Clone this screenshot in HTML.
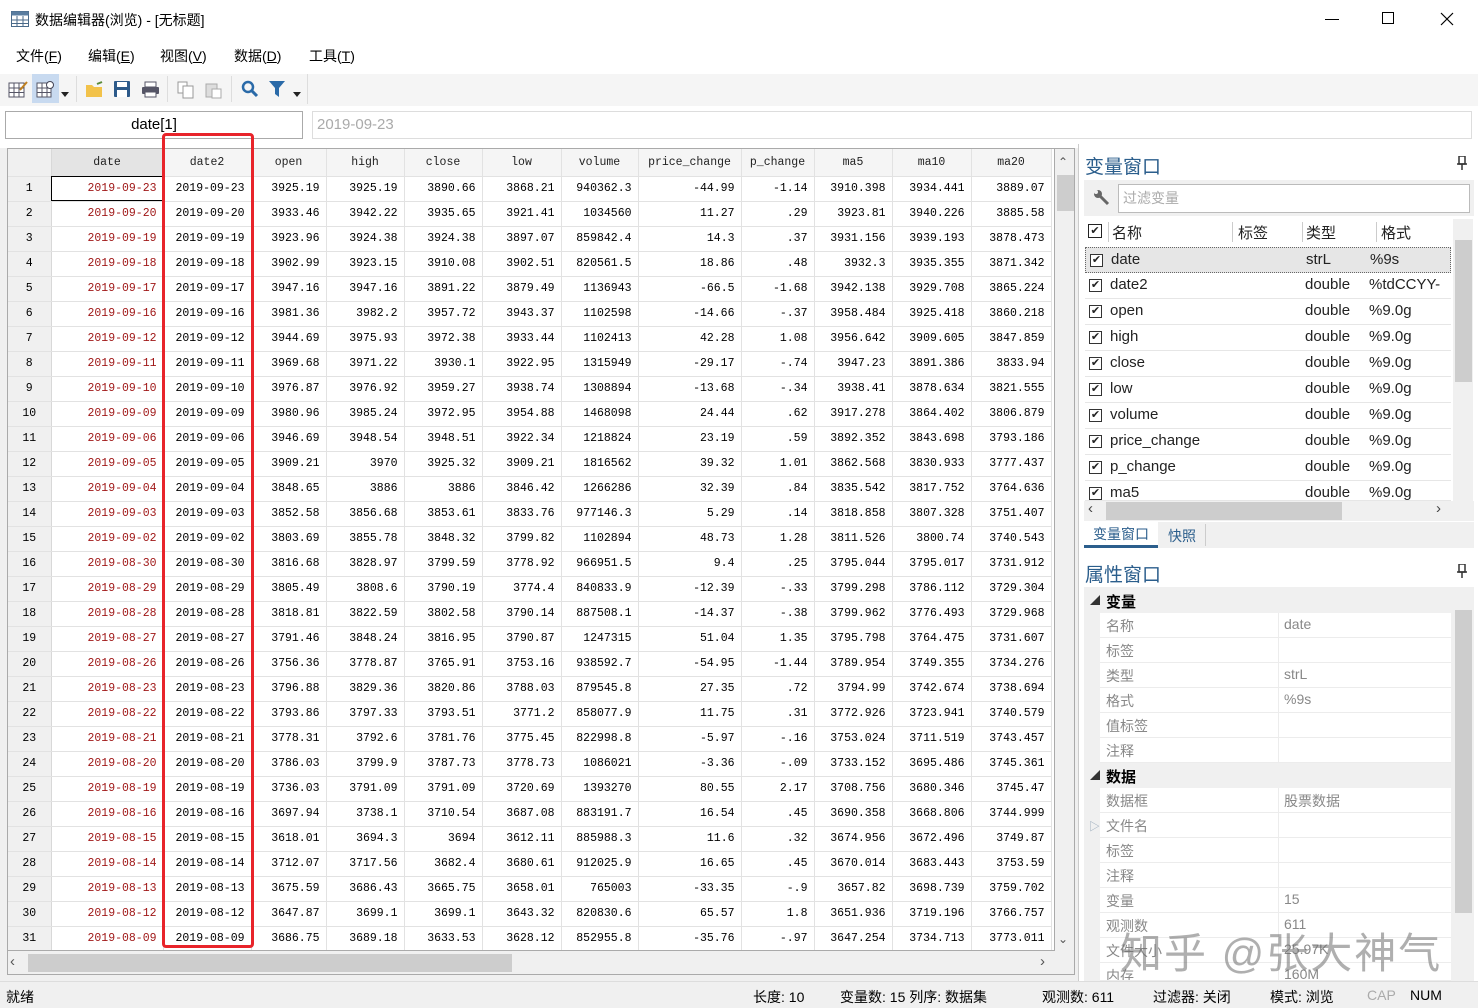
<!DOCTYPE html>
<html><head><meta charset="utf-8">
<style>
*{margin:0;padding:0;box-sizing:border-box}
body{width:1478px;height:1008px;overflow:hidden;background:#f0f0f0;font-family:"Liberation Sans","Noto Sans CJK SC",sans-serif;position:relative;color:#000}
.abs{position:absolute}
#title{left:0;top:0;width:1478px;height:38px;background:#fff;font-size:14px}
#menu{left:0;top:38px;width:1478px;height:36px;background:#fff;font-size:14px}
#menu span{position:absolute;top:8px}
#tb{left:0;top:74px;width:1478px;height:32px;background:#f5f5f5}
.grid{left:7px;top:148px;width:1048px;height:803px;background:#fff;overflow:hidden;border:1px solid #aaa}
table{border-collapse:collapse;table-layout:fixed;font-family:"Liberation Mono",monospace;font-size:11.5px}
td{height:25px;border-right:1px solid #e2e2e2;border-bottom:1px solid #e2e2e2;text-align:right;padding-right:6px;white-space:nowrap;overflow:hidden}
tr td:first-child{background:#f0f0f0;text-align:center;padding:0;border-right:1px solid #d8d8d8}
tr td:nth-child(2){color:#a01818}
tr.h td{background:#f5f5f5;text-align:center;padding:0;color:#222;height:27px}
tr.h td:nth-child(2){background:#e4e4e4;color:#222}
tr.h td:first-child{background:#f0f0f0}
.rp{font-size:15px}
.vr{position:absolute;left:1085px;width:366px;height:26px;border-bottom:1px solid #e6e6e6;font-size:15px;color:#222}
.vr .cb{position:absolute;left:4px;top:6px;width:13px;height:13px;border:1px solid #333;background:#fff;font-size:11px;line-height:11px;text-align:center}
.vr .n{position:absolute;left:25px;top:3px}
.vr .t{position:absolute;left:220px;top:3px}
.vr .f{position:absolute;left:284px;top:3px}
.pr{position:absolute;left:1100px;width:351px;height:25px;border-bottom:1px solid #ececec;background:#fff;font-size:14px;color:#888}
.pr .k{position:absolute;left:6px;top:3px}
.pr .v{position:absolute;left:184px;top:3px}
.pr::after{content:"";position:absolute;left:178px;top:0;height:25px;border-left:1px solid #ececec}
#status{left:0;top:981px;width:1478px;height:27px;background:#f0f0f0;font-size:14px;border-top:1px solid #ddd}
#status span{position:absolute;top:5px;white-space:nowrap}
</style></head><body>
<div id="title" class="abs">
 <svg class="abs" style="left:11px;top:11px" width="18" height="16"><rect x="0.5" y="0.5" width="17" height="15" fill="#fff" stroke="#4a6a8a"/><rect x="0.5" y="0.5" width="17" height="4" fill="#5a7da0"/><path d="M6 5V16M12 5V16M0 9H18M0 12.5H18" stroke="#4a6a8a"/></svg>
 <span class="abs" style="left:35px;top:10px">数据编辑器(浏览) - [无标题]</span>
 <div class="abs" style="left:1325px;top:19px;width:14px;height:1px;background:#000"></div>
 <div class="abs" style="left:1382px;top:12px;width:12px;height:12px;border:1px solid #000"></div>
 <svg class="abs" style="left:1440px;top:12px" width="14" height="14"><path d="M1 1L13 13M13 1L1 13" stroke="#000" stroke-width="1.2"/></svg>
</div>
<div id="menu" class="abs">
 <span style="left:16px">文件(<u>F</u>)</span><span style="left:88px">编辑(<u>E</u>)</span><span style="left:160px">视图(<u>V</u>)</span><span style="left:234px">数据(<u>D</u>)</span><span style="left:309px">工具(<u>T</u>)</span>
</div>
<div id="tb" class="abs">
 <svg class="abs" style="left:8px;top:6px" width="20" height="20"><rect x="1" y="3" width="15" height="14" fill="#fff" stroke="#556"/><path d="M1 8H16M1 12.5H16M6 3V17M11 3V17" stroke="#556"/><path d="M12 10L19 2" stroke="#c08020" stroke-width="2"/></svg>
 <div class="abs" style="left:32px;top:0;width:27px;height:29px;background:#c8daf0"></div>
 <svg class="abs" style="left:36px;top:6px" width="20" height="20"><rect x="1" y="3" width="14" height="14" fill="#fff" stroke="#556"/><path d="M1 8H15M1 12.5H15M6 3V17M11 3V17" stroke="#556"/><circle cx="14" cy="5" r="3.5" fill="#fff" stroke="#445"/></svg>
 <div class="abs" style="left:61px;top:18px;border:4px solid transparent;border-top:5px solid #222"></div>
 <div class="abs" style="left:76px;top:2px;width:1px;height:26px;background:#ddd"></div>
 <svg class="abs" style="left:85px;top:7px" width="20" height="18"><path d="M1 4H7L9 6H17V16H1Z" fill="#f2c24a"/><path d="M12 3L17 1" stroke="#5a8a3a" stroke-width="2"/></svg>
 <svg class="abs" style="left:113px;top:6px" width="18" height="18"><rect x="1" y="1" width="16" height="16" rx="1" fill="#2d5a8a"/><rect x="4" y="2" width="10" height="5" fill="#fff"/><rect x="4" y="10" width="10" height="7" fill="#fff"/></svg>
 <svg class="abs" style="left:141px;top:7px" width="19" height="17"><rect x="4" y="1" width="11" height="5" fill="#fff" stroke="#556"/><rect x="1" y="6" width="17" height="7" rx="1" fill="#556"/><rect x="4" y="11" width="11" height="5" fill="#fff" stroke="#556"/></svg>
 <div class="abs" style="left:167px;top:2px;width:1px;height:26px;background:#ddd"></div>
 <svg class="abs" style="left:177px;top:7px" width="18" height="18"><rect x="1" y="1" width="9" height="11" fill="#fff" stroke="#999"/><rect x="6" y="5" width="10" height="12" fill="#fff" stroke="#999"/></svg>
 <svg class="abs" style="left:205px;top:7px" width="18" height="18"><rect x="1" y="3" width="11" height="13" fill="#ddd" stroke="#aaa"/><rect x="7" y="8" width="9" height="9" fill="#fff" stroke="#aaa"/></svg>
 <div class="abs" style="left:231px;top:2px;width:1px;height:26px;background:#ddd"></div>
 <svg class="abs" style="left:241px;top:6px" width="18" height="18"><circle cx="7" cy="7" r="5" fill="none" stroke="#2a6aa8" stroke-width="2.5"/><path d="M11 11L16 16" stroke="#2a6aa8" stroke-width="3"/></svg>
 <svg class="abs" style="left:268px;top:6px" width="18" height="18"><path d="M1 1H17L11 8V17L7 14V8Z" fill="#2a6aa8"/></svg>
 <div class="abs" style="left:293px;top:18px;border:4px solid transparent;border-top:5px solid #222"></div>
 <div class="abs" style="left:307px;top:0;width:1px;height:30px;background:#ddd"></div>
</div>
<div class="abs" style="left:0;top:106px;width:1478px;height:42px;background:#fff"></div>
<div class="abs" style="left:5px;top:111px;width:298px;height:28px;background:#fff;border:1px solid #aaa;text-align:center;font-size:15px;line-height:26px">date[1]</div>
<div class="abs" style="left:312px;top:111px;width:1160px;height:28px;background:#fff;border:1px solid #ddd;font-size:15px;line-height:26px;color:#aaa;padding-left:4px">2019-09-23</div>

<div class="abs grid">
<table>
<colgroup><col style="width:43px"><col style="width:112px"><col style="width:88px"><col style="width:75px"><col style="width:78px"><col style="width:78px"><col style="width:79px"><col style="width:77px"><col style="width:103px"><col style="width:73px"><col style="width:78px"><col style="width:79px"><col style="width:80px"></colgroup>
<tr class="h"><td></td><td>date</td><td>date2</td><td>open</td><td>high</td><td>close</td><td>low</td><td>volume</td><td>price_change</td><td>p_change</td><td>ma5</td><td>ma10</td><td>ma20</td></tr>
<tr><td>1</td><td style="outline:1px solid #000;outline-offset:-1px">2019-09-23</td><td>2019-09-23</td><td>3925.19</td><td>3925.19</td><td>3890.66</td><td>3868.21</td><td>940362.3</td><td>-44.99</td><td>-1.14</td><td>3910.398</td><td>3934.441</td><td>3889.07</td></tr>
<tr><td>2</td><td>2019-09-20</td><td>2019-09-20</td><td>3933.46</td><td>3942.22</td><td>3935.65</td><td>3921.41</td><td>1034560</td><td>11.27</td><td>.29</td><td>3923.81</td><td>3940.226</td><td>3885.58</td></tr>
<tr><td>3</td><td>2019-09-19</td><td>2019-09-19</td><td>3923.96</td><td>3924.38</td><td>3924.38</td><td>3897.07</td><td>859842.4</td><td>14.3</td><td>.37</td><td>3931.156</td><td>3939.193</td><td>3878.473</td></tr>
<tr><td>4</td><td>2019-09-18</td><td>2019-09-18</td><td>3902.99</td><td>3923.15</td><td>3910.08</td><td>3902.51</td><td>820561.5</td><td>18.86</td><td>.48</td><td>3932.3</td><td>3935.355</td><td>3871.342</td></tr>
<tr><td>5</td><td>2019-09-17</td><td>2019-09-17</td><td>3947.16</td><td>3947.16</td><td>3891.22</td><td>3879.49</td><td>1136943</td><td>-66.5</td><td>-1.68</td><td>3942.138</td><td>3929.708</td><td>3865.224</td></tr>
<tr><td>6</td><td>2019-09-16</td><td>2019-09-16</td><td>3981.36</td><td>3982.2</td><td>3957.72</td><td>3943.37</td><td>1102598</td><td>-14.66</td><td>-.37</td><td>3958.484</td><td>3925.418</td><td>3860.218</td></tr>
<tr><td>7</td><td>2019-09-12</td><td>2019-09-12</td><td>3944.69</td><td>3975.93</td><td>3972.38</td><td>3933.44</td><td>1102413</td><td>42.28</td><td>1.08</td><td>3956.642</td><td>3909.605</td><td>3847.859</td></tr>
<tr><td>8</td><td>2019-09-11</td><td>2019-09-11</td><td>3969.68</td><td>3971.22</td><td>3930.1</td><td>3922.95</td><td>1315949</td><td>-29.17</td><td>-.74</td><td>3947.23</td><td>3891.386</td><td>3833.94</td></tr>
<tr><td>9</td><td>2019-09-10</td><td>2019-09-10</td><td>3976.87</td><td>3976.92</td><td>3959.27</td><td>3938.74</td><td>1308894</td><td>-13.68</td><td>-.34</td><td>3938.41</td><td>3878.634</td><td>3821.555</td></tr>
<tr><td>10</td><td>2019-09-09</td><td>2019-09-09</td><td>3980.96</td><td>3985.24</td><td>3972.95</td><td>3954.88</td><td>1468098</td><td>24.44</td><td>.62</td><td>3917.278</td><td>3864.402</td><td>3806.879</td></tr>
<tr><td>11</td><td>2019-09-06</td><td>2019-09-06</td><td>3946.69</td><td>3948.54</td><td>3948.51</td><td>3922.34</td><td>1218824</td><td>23.19</td><td>.59</td><td>3892.352</td><td>3843.698</td><td>3793.186</td></tr>
<tr><td>12</td><td>2019-09-05</td><td>2019-09-05</td><td>3909.21</td><td>3970</td><td>3925.32</td><td>3909.21</td><td>1816562</td><td>39.32</td><td>1.01</td><td>3862.568</td><td>3830.933</td><td>3777.437</td></tr>
<tr><td>13</td><td>2019-09-04</td><td>2019-09-04</td><td>3848.65</td><td>3886</td><td>3886</td><td>3846.42</td><td>1266286</td><td>32.39</td><td>.84</td><td>3835.542</td><td>3817.752</td><td>3764.636</td></tr>
<tr><td>14</td><td>2019-09-03</td><td>2019-09-03</td><td>3852.58</td><td>3856.68</td><td>3853.61</td><td>3833.76</td><td>977146.3</td><td>5.29</td><td>.14</td><td>3818.858</td><td>3807.328</td><td>3751.407</td></tr>
<tr><td>15</td><td>2019-09-02</td><td>2019-09-02</td><td>3803.69</td><td>3855.78</td><td>3848.32</td><td>3799.82</td><td>1102894</td><td>48.73</td><td>1.28</td><td>3811.526</td><td>3800.74</td><td>3740.543</td></tr>
<tr><td>16</td><td>2019-08-30</td><td>2019-08-30</td><td>3816.68</td><td>3828.97</td><td>3799.59</td><td>3778.92</td><td>966951.5</td><td>9.4</td><td>.25</td><td>3795.044</td><td>3795.017</td><td>3731.912</td></tr>
<tr><td>17</td><td>2019-08-29</td><td>2019-08-29</td><td>3805.49</td><td>3808.6</td><td>3790.19</td><td>3774.4</td><td>840833.9</td><td>-12.39</td><td>-.33</td><td>3799.298</td><td>3786.112</td><td>3729.304</td></tr>
<tr><td>18</td><td>2019-08-28</td><td>2019-08-28</td><td>3818.81</td><td>3822.59</td><td>3802.58</td><td>3790.14</td><td>887508.1</td><td>-14.37</td><td>-.38</td><td>3799.962</td><td>3776.493</td><td>3729.968</td></tr>
<tr><td>19</td><td>2019-08-27</td><td>2019-08-27</td><td>3791.46</td><td>3848.24</td><td>3816.95</td><td>3790.87</td><td>1247315</td><td>51.04</td><td>1.35</td><td>3795.798</td><td>3764.475</td><td>3731.607</td></tr>
<tr><td>20</td><td>2019-08-26</td><td>2019-08-26</td><td>3756.36</td><td>3778.87</td><td>3765.91</td><td>3753.16</td><td>938592.7</td><td>-54.95</td><td>-1.44</td><td>3789.954</td><td>3749.355</td><td>3734.276</td></tr>
<tr><td>21</td><td>2019-08-23</td><td>2019-08-23</td><td>3796.88</td><td>3829.36</td><td>3820.86</td><td>3788.03</td><td>879545.8</td><td>27.35</td><td>.72</td><td>3794.99</td><td>3742.674</td><td>3738.694</td></tr>
<tr><td>22</td><td>2019-08-22</td><td>2019-08-22</td><td>3793.86</td><td>3797.33</td><td>3793.51</td><td>3771.2</td><td>858077.9</td><td>11.75</td><td>.31</td><td>3772.926</td><td>3723.941</td><td>3740.579</td></tr>
<tr><td>23</td><td>2019-08-21</td><td>2019-08-21</td><td>3778.31</td><td>3792.6</td><td>3781.76</td><td>3775.45</td><td>822998.8</td><td>-5.97</td><td>-.16</td><td>3753.024</td><td>3711.519</td><td>3743.457</td></tr>
<tr><td>24</td><td>2019-08-20</td><td>2019-08-20</td><td>3786.03</td><td>3799.9</td><td>3787.73</td><td>3778.73</td><td>1086021</td><td>-3.36</td><td>-.09</td><td>3733.152</td><td>3695.486</td><td>3745.361</td></tr>
<tr><td>25</td><td>2019-08-19</td><td>2019-08-19</td><td>3736.03</td><td>3791.09</td><td>3791.09</td><td>3720.69</td><td>1393270</td><td>80.55</td><td>2.17</td><td>3708.756</td><td>3680.346</td><td>3745.47</td></tr>
<tr><td>26</td><td>2019-08-16</td><td>2019-08-16</td><td>3697.94</td><td>3738.1</td><td>3710.54</td><td>3687.08</td><td>883191.7</td><td>16.54</td><td>.45</td><td>3690.358</td><td>3668.806</td><td>3744.999</td></tr>
<tr><td>27</td><td>2019-08-15</td><td>2019-08-15</td><td>3618.01</td><td>3694.3</td><td>3694</td><td>3612.11</td><td>885988.3</td><td>11.6</td><td>.32</td><td>3674.956</td><td>3672.496</td><td>3749.87</td></tr>
<tr><td>28</td><td>2019-08-14</td><td>2019-08-14</td><td>3712.07</td><td>3717.56</td><td>3682.4</td><td>3680.61</td><td>912025.9</td><td>16.65</td><td>.45</td><td>3670.014</td><td>3683.443</td><td>3753.59</td></tr>
<tr><td>29</td><td>2019-08-13</td><td>2019-08-13</td><td>3675.59</td><td>3686.43</td><td>3665.75</td><td>3658.01</td><td>765003</td><td>-33.35</td><td>-.9</td><td>3657.82</td><td>3698.739</td><td>3759.702</td></tr>
<tr><td>30</td><td>2019-08-12</td><td>2019-08-12</td><td>3647.87</td><td>3699.1</td><td>3699.1</td><td>3643.32</td><td>820830.6</td><td>65.57</td><td>1.8</td><td>3651.936</td><td>3719.196</td><td>3766.757</td></tr>
<tr><td>31</td><td>2019-08-09</td><td>2019-08-09</td><td>3686.75</td><td>3689.18</td><td>3633.53</td><td>3628.12</td><td>852955.8</td><td>-35.76</td><td>-.97</td><td>3647.254</td><td>3734.713</td><td>3773.011</td></tr>
</table>
</div>
<!-- grid scrollbars -->
<div class="abs" style="left:1055px;top:148px;width:20px;height:803px;background:#f0f0f0;border-right:1px solid #aaa;border-top:1px solid #aaa"></div>
<div class="abs" style="left:1058px;top:155px;font-size:12px;color:#555">&#8963;</div>
<div class="abs" style="left:1057px;top:175px;width:17px;height:36px;background:#cdcdcd"></div>
<div class="abs" style="left:1058px;top:932px;font-size:12px;color:#555">&#8964;</div>
<div class="abs" style="left:7px;top:951px;width:1068px;height:24px;background:#f0f0f0;border:1px solid #aaa;border-top:none"></div>
<div class="abs" style="left:10px;top:953px;font-size:15px;color:#555">&#8249;</div>
<div class="abs" style="left:28px;top:954px;width:484px;height:18px;background:#cdcdcd"></div>
<div class="abs" style="left:1040px;top:953px;font-size:15px;color:#555">&#8250;</div>
<!-- red box -->
<div class="abs" style="left:162px;top:133px;width:92px;height:815px;border:3px solid #e8242a;border-radius:4px"></div>

<!-- right panel -->
<div class="abs" style="left:1078px;top:144px;width:400px;height:837px;background:#fff;border-left:1px solid #ccc"></div>
<div class="abs rp" style="left:1085px;top:152px;font-size:19px;color:#2b5e8c">变量窗口</div>
<svg class="abs" style="left:1456px;top:156px" width="12" height="14"><rect x="3" y="0" width="6" height="8" fill="none" stroke="#333" stroke-width="1.5"/><path d="M1 8H11M6 8V14" stroke="#333" stroke-width="1.5"/></svg>
<div class="abs" style="left:1084px;top:180px;width:390px;height:36px;background:#f0f0f0"></div>
<svg class="abs" style="left:1093px;top:189px" width="18" height="18"><path d="M3 3L15 15" stroke="#666" stroke-width="3"/><circle cx="5" cy="5" r="4" fill="#666"/><circle cx="3" cy="3" r="2" fill="#f0f0f0"/></svg>
<div class="abs" style="left:1118px;top:184px;width:352px;height:29px;background:#fff;border:1px solid #bbb;font-size:14px;color:#aaa;line-height:27px;padding-left:4px">过滤变量</div>
<div class="abs" style="left:1084px;top:218px;width:367px;height:27px;background:#fff;font-size:15px;color:#222">
 <div class="abs" style="left:4px;top:6px;width:14px;height:14px;border:1px solid #222;font-size:11px;line-height:12px;text-align:center">&#10004;</div>
 <span class="abs" style="left:28px;top:4px">名称</span><span class="abs" style="left:154px;top:4px">标签</span><span class="abs" style="left:222px;top:4px">类型</span><span class="abs" style="left:297px;top:4px">格式</span>
 <div class="abs" style="left:24px;top:4px;height:20px;border-left:1px solid #ccc"></div><div class="abs" style="left:148px;top:4px;height:20px;border-left:1px solid #ccc"></div><div class="abs" style="left:218px;top:4px;height:20px;border-left:1px solid #ccc"></div><div class="abs" style="left:292px;top:4px;height:20px;border-left:1px solid #ccc"></div>
</div>
<div class="vr" style="top:247px;background:#e6e6e6;border:1px dotted #666"><div class="cb">&#10004;</div><span class="n">date</span><span class="t">strL</span><span class="f">%9s</span></div>
<div class="vr" style="top:273px"><div class="cb">&#10004;</div><span class="n">date2</span><span class="t">double</span><span class="f">%tdCCYY-</span></div>
<div class="vr" style="top:299px"><div class="cb">&#10004;</div><span class="n">open</span><span class="t">double</span><span class="f">%9.0g</span></div>
<div class="vr" style="top:325px"><div class="cb">&#10004;</div><span class="n">high</span><span class="t">double</span><span class="f">%9.0g</span></div>
<div class="vr" style="top:351px"><div class="cb">&#10004;</div><span class="n">close</span><span class="t">double</span><span class="f">%9.0g</span></div>
<div class="vr" style="top:377px"><div class="cb">&#10004;</div><span class="n">low</span><span class="t">double</span><span class="f">%9.0g</span></div>
<div class="vr" style="top:403px"><div class="cb">&#10004;</div><span class="n">volume</span><span class="t">double</span><span class="f">%9.0g</span></div>
<div class="vr" style="top:429px"><div class="cb">&#10004;</div><span class="n">price_change</span><span class="t">double</span><span class="f">%9.0g</span></div>
<div class="vr" style="top:455px"><div class="cb">&#10004;</div><span class="n">p_change</span><span class="t">double</span><span class="f">%9.0g</span></div>
<div class="vr" style="top:481px;height:20px;overflow:hidden"><div class="cb">&#10004;</div><span class="n">ma5</span><span class="t">double</span><span class="f">%9.0g</span></div>
<div class="abs" style="left:1453px;top:219px;width:20px;height:282px;background:#f0f0f0"></div>
<div class="abs" style="left:1455px;top:240px;width:17px;height:142px;background:#cdcdcd"></div>
<div class="abs" style="left:1084px;top:501px;width:390px;height:20px;background:#f0f0f0"></div>
<div class="abs" style="left:1106px;top:502px;width:236px;height:18px;background:#cdcdcd"></div>
<div class="abs" style="left:1088px;top:500px;font-size:15px;color:#444">&#8249;</div>
<div class="abs" style="left:1436px;top:500px;font-size:15px;color:#444">&#8250;</div>
<div class="abs" style="left:1084px;top:522px;width:390px;height:26px;background:#f0f0f0"></div>
<div class="abs" style="left:1084px;top:522px;width:74px;height:26px;background:#fff;border-bottom:3px solid #2b5e8c;font-size:14px;color:#2b5e8c;text-align:center;line-height:24px">变量窗口</div>
<div class="abs" style="left:1168px;top:526px;font-size:14px;color:#2b5e8c">快照</div>
<div class="abs" style="left:1205px;top:524px;height:22px;border-left:1px solid #ccc"></div>
<div class="abs rp" style="left:1085px;top:560px;font-size:19px;color:#2b5e8c">属性窗口</div>
<svg class="abs" style="left:1456px;top:564px" width="12" height="14"><rect x="3" y="0" width="6" height="8" fill="none" stroke="#333" stroke-width="1.5"/><path d="M1 8H11M6 8V14" stroke="#333" stroke-width="1.5"/></svg>
<div class="abs" style="left:1084px;top:587px;width:390px;height:394px;background:#f0f0f0"></div>
<div class="abs" style="left:1090px;top:592px;font-size:10px;color:#333">&#9698;</div>
<div class="abs" style="left:1106px;top:591px;font-size:15px;font-weight:bold">变量</div>
<div class="pr" style="top:613px"><span class="k">名称</span><span class="v">date</span></div>
<div class="pr" style="top:638px"><span class="k">标签</span><span class="v"></span></div>
<div class="pr" style="top:663px"><span class="k">类型</span><span class="v">strL</span></div>
<div class="pr" style="top:688px"><span class="k">格式</span><span class="v">%9s</span></div>
<div class="pr" style="top:713px"><span class="k">值标签</span><span class="v"></span></div>
<div class="pr" style="top:738px"><span class="k">注释</span><span class="v"></span></div>
<div class="abs" style="left:1090px;top:767px;font-size:10px;color:#333">&#9698;</div>
<div class="abs" style="left:1106px;top:766px;font-size:15px;font-weight:bold">数据</div>
<div class="pr" style="top:788px"><span class="k">数据框</span><span class="v">股票数据</span></div>
<div class="pr" style="top:813px"><span class="k">文件名</span><span class="v"></span></div>
<div class="abs" style="left:1089px;top:818px;font-size:11px;color:#9ab">&#9655;</div>
<div class="pr" style="top:838px"><span class="k">标签</span><span class="v"></span></div>
<div class="pr" style="top:863px"><span class="k">注释</span><span class="v"></span></div>
<div class="pr" style="top:888px"><span class="k">变量</span><span class="v">15</span></div>
<div class="pr" style="top:913px"><span class="k">观测数</span><span class="v">611</span></div>
<div class="pr" style="top:938px"><span class="k">文件大小</span><span class="v">25.97K</span></div>
<div class="pr" style="top:963px;height:18px;overflow:hidden"><span class="k">内存</span><span class="v">160M</span></div>
<div class="abs" style="left:1453px;top:588px;width:20px;height:392px;background:#f0f0f0"></div>
<div class="abs" style="left:1455px;top:610px;width:17px;height:303px;background:#cdcdcd"></div>
<div class="abs" style="left:1120px;top:920px;font-size:42px;color:rgba(110,110,110,0.55);white-space:nowrap;letter-spacing:2px">知乎 @张大神气</div>

<div id="status" class="abs">
 <span style="left:6px">就绪</span>
 <span style="left:753px">长度: 10</span>
 <span style="left:840px">变量数: 15 列序: 数据集</span>
 <span style="left:1042px">观测数: 611</span>
 <span style="left:1153px">过滤器: 关闭</span>
 <span style="left:1270px">模式: 浏览</span>
 <span style="left:1367px;color:#aaa">CAP</span>
 <span style="left:1410px">NUM</span>
</div>
</body></html>
